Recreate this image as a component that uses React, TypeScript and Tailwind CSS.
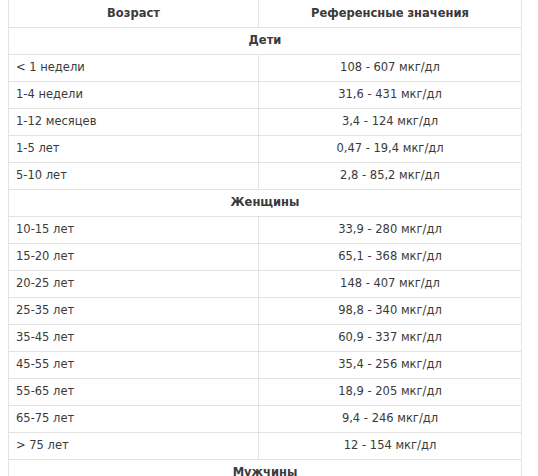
import React from 'react';

type Row = { age: string; value: string } | { section: string };

const rows: Row[] = [
  { section: 'Дети' },
  { age: '< 1 недели', value: '108 - 607 мкг/дл' },
  { age: '1-4 недели', value: '31,6 - 431 мкг/дл' },
  { age: '1-12 месяцев', value: '3,4 - 124 мкг/дл' },
  { age: '1-5 лет', value: '0,47 - 19,4 мкг/дл' },
  { age: '5-10 лет', value: '2,8 - 85,2 мкг/дл' },
  { section: 'Женщины' },
  { age: '10-15 лет', value: '33,9 - 280 мкг/дл' },
  { age: '15-20 лет', value: '65,1 - 368 мкг/дл' },
  { age: '20-25 лет', value: '148 - 407 мкг/дл' },
  { age: '25-35 лет', value: '98,8 - 340 мкг/дл' },
  { age: '35-45 лет', value: '60,9 - 337 мкг/дл' },
  { age: '45-55 лет', value: '35,4 - 256 мкг/дл' },
  { age: '55-65 лет', value: '18,9 - 205 мкг/дл' },
  { age: '65-75 лет', value: '9,4 - 246 мкг/дл' },
  { age: '> 75 лет', value: '12 - 154 мкг/дл' },
  { section: 'Мужчины' },
];

export default function App() {
  return (
    <div className="h-[476px] w-[538px] overflow-hidden bg-white pl-2 text-[#3a3a3a] [font-family:'DejaVu_Sans',sans-serif] text-[11.5px]">
      <table className="w-[514px] border-collapse">
        <thead>
          <tr className="h-[27px]">
            <th className="w-[250px] border-x border-b border-[#e3e3e3] font-bold">Возраст</th>
            <th className="border-x border-b border-[#e3e3e3] font-bold">Референсные значения</th>
          </tr>
        </thead>
        <tbody>
          {rows.map((r, i) =>
            'section' in r ? (
              <tr key={i} className="h-[27px]">
                <td colSpan={2} className="border border-[#e3e3e3] text-center font-bold">
                  {r.section}
                </td>
              </tr>
            ) : (
              <tr key={i} className="h-[27px]">
                <td className="border border-[#e3e3e3] px-[7px]">{r.age}</td>
                <td className="border border-[#e3e3e3] text-center">{r.value}</td>
              </tr>
            )
          )}
        </tbody>
      </table>
    </div>
  );
}
